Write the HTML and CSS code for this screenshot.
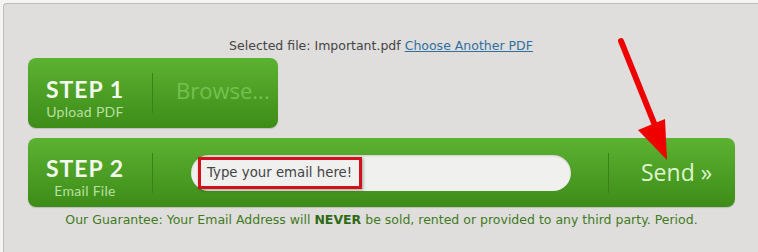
FILE: index.html
```html
<!DOCTYPE html>
<html lang="en">
<head>
    <meta charset="UTF-8">
    <title>Email PDF</title>
    <link rel="stylesheet" href="styles.css">
</head>
<body>
    <div class="panel">
        <div class="selected-file">
            Selected file: Important.pdf <a href="#" class="choose-link">Choose Another PDF</a>
        </div>

        <!-- step 1 -->
        <div class="step step-one">
            <div class="step-label">
                <div class="step-title">STEP 1</div>
                <div class="step-sub">Upload PDF</div>
            </div>
            <div class="step-action">Browse...</div>
        </div>

        <!-- step 2 -->
        <div class="step step-two">
            <div class="step-label">
                <div class="step-title">STEP 2</div>
                <div class="step-sub">Email File</div>
            </div>
            <div class="email-field">
                <div class="email-hint">Type your email here!</div>
            </div>
            <div class="send-btn">Send &raquo;</div>
        </div>

        <div class="guarantee">
            Our Guarantee: Your Email Address will <strong>NEVER</strong> be sold, rented or provided to any third party. Period.
        </div>

        <!-- red arrow pointing at send -->
        <svg class="arrow" width="80" height="140" viewBox="0 0 80 140">
            <line x1="17" y1="10" x2="50" y2="92" stroke="#ee0000" stroke-width="6" stroke-linecap="round"/>
            <polygon points="34,99 61,88 63,129" fill="#ee0000"/>
        </svg>
    </div>
</body>
</html>
```

FILE: styles.css
```css
* {
    margin: 0;
    padding: 0;
    box-sizing: border-box;
}

body {
    background: #f4f4f4;
    font-family: "DejaVu Sans", Verdana, sans-serif;
    overflow: hidden;
}

/* grey outer panel */
.panel {
    position: relative;
    margin: 3px 0 0 3px;
    height: 249px;
    background: #dfdedc;
    border-top: 1px solid #bdbcba;
    border-left: 1px solid #bdbcba;
    border-top-left-radius: 4px;
    padding: 33px 0 0 24px;
}

.selected-file {
    font-size: 12.5px;
    color: #444;
    text-align: center;
    padding-right: 24px;
    height: 21px;
    line-height: 18px;
}

.choose-link {
    color: #2f6f9f;
}

/* green step bars */
.step {
    display: flex;
    align-items: center;
    height: 70px;
    border-radius: 8px;
    background: linear-gradient(#5cb231, #3d8c18);
    box-shadow: 0 1px 1px rgba(0, 0, 0, 0.15);
}

.step-one {
    width: 250px;
}

.step-two {
    width: 707px;
    height: 69px;
    margin-top: 10px;
}

.step-label {
    width: 125px;
    height: 40px;
    border-right: 1px solid #3c7f1b;
    display: flex;
    flex-direction: column;
    align-items: center;
    justify-content: center;
    padding: 9px 10px 0 0;
    font-family: Lato, "Open Sans", sans-serif;
}

.step-title {
    color: #f4faf0;
    font-size: 23px;
    font-weight: 700;
    line-height: 28px;
    letter-spacing: 1px;
}

.step-sub {
    color: #b8e0a0;
    font-size: 14px;
    line-height: 18px;
    letter-spacing: 0.3px;
}

.step-action {
    font-family: "Open Sans", sans-serif;
    color: #74c150;
    font-size: 22px;
    padding-left: 23px;
    padding-bottom: 6px;
}

/* email input */
.email-field {
    margin-left: 38px;
    width: 380px;
    height: 36px;
    border-radius: 18px;
    background: #f0f0ef;
    box-shadow: inset 0 1px 2px rgba(0, 0, 0, 0.15);
    display: flex;
    align-items: center;
    padding-left: 7px;
}

.email-hint {
    width: 164px;
    height: 32px;
    border: 3px solid #d2111b;
    box-shadow: 1px 1px 3px rgba(0, 0, 0, 0.35);
    font-size: 13.3px;
    color: #444;
    line-height: 26px;
    padding-left: 6px;
}

.send-btn {
    margin-left: 37px;
    height: 40px;
    border-left: 1px solid #3c7f1b;
    padding-left: 32px;
    font-family: "Open Sans", sans-serif;
    font-size: 23px;
    color: #dff5d0;
    line-height: 38px;
}

.guarantee {
    margin-top: 5px;
    width: 707px;
    text-align: center;
    font-size: 12.5px;
    line-height: 16px;
    color: #3f7a22;
}

.guarantee strong {
    color: #2f6a14;
}

.arrow {
    position: absolute;
    left: 600px;
    top: 27px;
}
```
